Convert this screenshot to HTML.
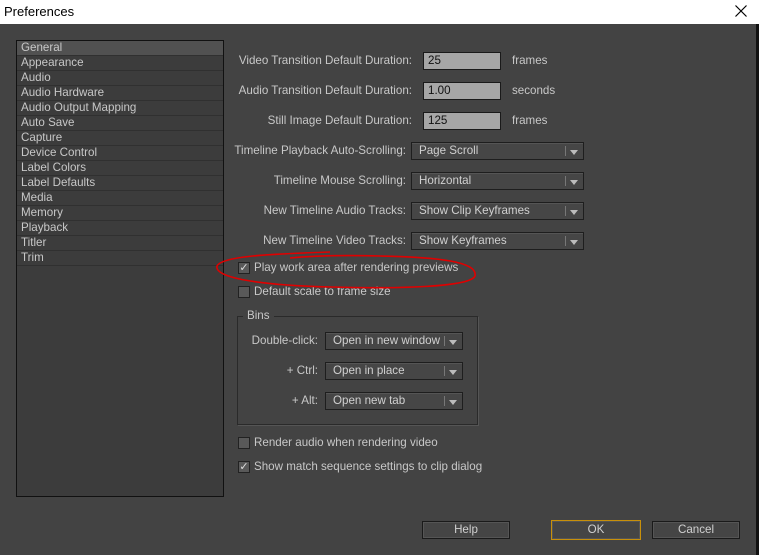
<!DOCTYPE html>
<html><head><style>
*{margin:0;padding:0;box-sizing:border-box}
body{width:759px;height:555px;background:#434343;font-family:"Liberation Sans",sans-serif;font-size:11.6px;color:#c8c8c8;position:relative;overflow:hidden}
.a{position:absolute;white-space:nowrap}
.title{left:0;top:0;width:759px;height:24px;background:#fff;color:#000;font-size:13px}
.list{left:16px;top:40px;width:208px;height:457px;border:1px solid #111;background:#3c3c3c}
.li{height:15px;line-height:14px;padding-left:4px;border-bottom:1px solid #303030;color:#c8c8c8}
.inp{height:18px;background:#a6a6a6;border:1px solid #1a1a1a;color:#111;padding-left:4px;line-height:16px}
.dd{height:18px;background:#464646;border:1px solid #1e1e1e;box-shadow:inset 0 1px 0 #555;padding-left:7px;line-height:16px;color:#d0d0d0;overflow:hidden}
.dd:after{content:"";position:absolute;right:5px;top:7px;border-left:4px solid transparent;border-right:4px solid transparent;border-top:5px solid #bbb}
.dd:before{content:"";position:absolute;right:17px;top:3px;width:1px;height:10px;background:#777}
.r{text-align:right}
.cb{width:12px;height:12px;border:1px solid #222;background:#595959}
.btn{height:18px;background:#454545;border:1px solid #1a1a1a;box-shadow:inset 0 0 0 1px #555;text-align:center;line-height:16px;color:#d0d0d0}
</style></head><body>
<div class="a title"><span class="a" style="left:4px;top:4px">Preferences</span>
<svg class="a" style="left:735px;top:5px" width="12" height="12"><path d="M0.5 0.5L11.5 11.5M11.5 0.5L0.5 11.5" stroke="#000" stroke-width="1.2"/></svg></div>
<div class="a" style="left:756px;top:24px;width:3px;height:531px;background:#111"></div>
<div class="a list">
<div class="li" style="background:#515151">General</div><div class="li">Appearance</div><div class="li">Audio</div><div class="li">Audio Hardware</div><div class="li">Audio Output Mapping</div><div class="li">Auto Save</div><div class="li">Capture</div><div class="li">Device Control</div><div class="li">Label Colors</div><div class="li">Label Defaults</div><div class="li">Media</div><div class="li">Memory</div><div class="li">Playback</div><div class="li">Titler</div><div class="li">Trim</div>
</div>
<div class="a r" style="right:347px;top:54px">Video Transition Default Duration:</div>
<div class="a r" style="right:347px;top:84px">Audio Transition Default Duration:</div>
<div class="a r" style="right:347px;top:114px">Still Image Default Duration:</div>
<div class="a inp" style="left:423px;top:52px;width:78px">25</div>
<div class="a inp" style="left:423px;top:82px;width:78px">1.00</div>
<div class="a inp" style="left:423px;top:112px;width:78px">125</div>
<div class="a" style="left:512px;top:54px">frames</div>
<div class="a" style="left:512px;top:84px">seconds</div>
<div class="a" style="left:512px;top:114px">frames</div>
<div class="a r" style="right:353px;top:144px">Timeline Playback Auto-Scrolling:</div>
<div class="a r" style="right:353px;top:174px">Timeline Mouse Scrolling:</div>
<div class="a r" style="right:353px;top:204px">New Timeline Audio Tracks:</div>
<div class="a r" style="right:353px;top:234px">New Timeline Video Tracks:</div>
<div class="a dd" style="left:411px;top:142px;width:173px">Page Scroll</div>
<div class="a dd" style="left:411px;top:172px;width:173px">Horizontal</div>
<div class="a dd" style="left:411px;top:202px;width:173px">Show Clip Keyframes</div>
<div class="a dd" style="left:411px;top:232px;width:173px">Show Keyframes</div>
<div class="a cb" style="left:238px;top:262px;color:#ddd;font-size:11px;line-height:10px;text-align:center">✓</div>
<div class="a" style="left:254px;top:261px">Play work area after rendering previews</div>
<div class="a cb" style="left:238px;top:286px"></div>
<div class="a" style="left:254px;top:285px">Default scale to frame size</div>
<div class="a" style="left:237px;top:316px;width:241px;height:109px;border:1px solid #2a2a2a;box-shadow:1px 1px 0 #555"></div>
<div class="a" style="left:243px;top:309px;background:#434343;padding:0 4px">Bins</div>
<div class="a r" style="right:441px;top:334px">Double-click:</div>
<div class="a r" style="right:441px;top:364px">+ Ctrl:</div>
<div class="a r" style="right:441px;top:394px">+ Alt:</div>
<div class="a dd" style="left:325px;top:332px;width:138px;padding-right:20px">Open in new window</div>
<div class="a dd" style="left:325px;top:362px;width:138px">Open in place</div>
<div class="a dd" style="left:325px;top:392px;width:138px">Open new tab</div>
<div class="a cb" style="left:238px;top:437px"></div>
<div class="a" style="left:254px;top:436px">Render audio when rendering video</div>
<div class="a cb" style="left:238px;top:461px;color:#ddd;font-size:11px;line-height:10px;text-align:center">✓</div>
<div class="a" style="left:254px;top:460px">Show match sequence settings to clip dialog</div>
<div class="a btn" style="left:422px;top:521px;width:88px">Help</div>
<div class="a btn" style="left:551px;top:520px;width:90px;height:20px;border:1px solid #c8900a;line-height:18px">OK</div>
<div class="a btn" style="left:652px;top:521px;width:88px">Cancel</div>
<svg class="a" style="left:0;top:0" width="759" height="555"><path d="M330 252 C270 254 222 256 217 266 C214 278 260 285 330 287 C400 289 470 287 475 276 C478 262 440 257 380 256 C340 255 310 256 290 258" fill="none" stroke="#e00000" stroke-width="1.6"/></svg>
</body></html>
